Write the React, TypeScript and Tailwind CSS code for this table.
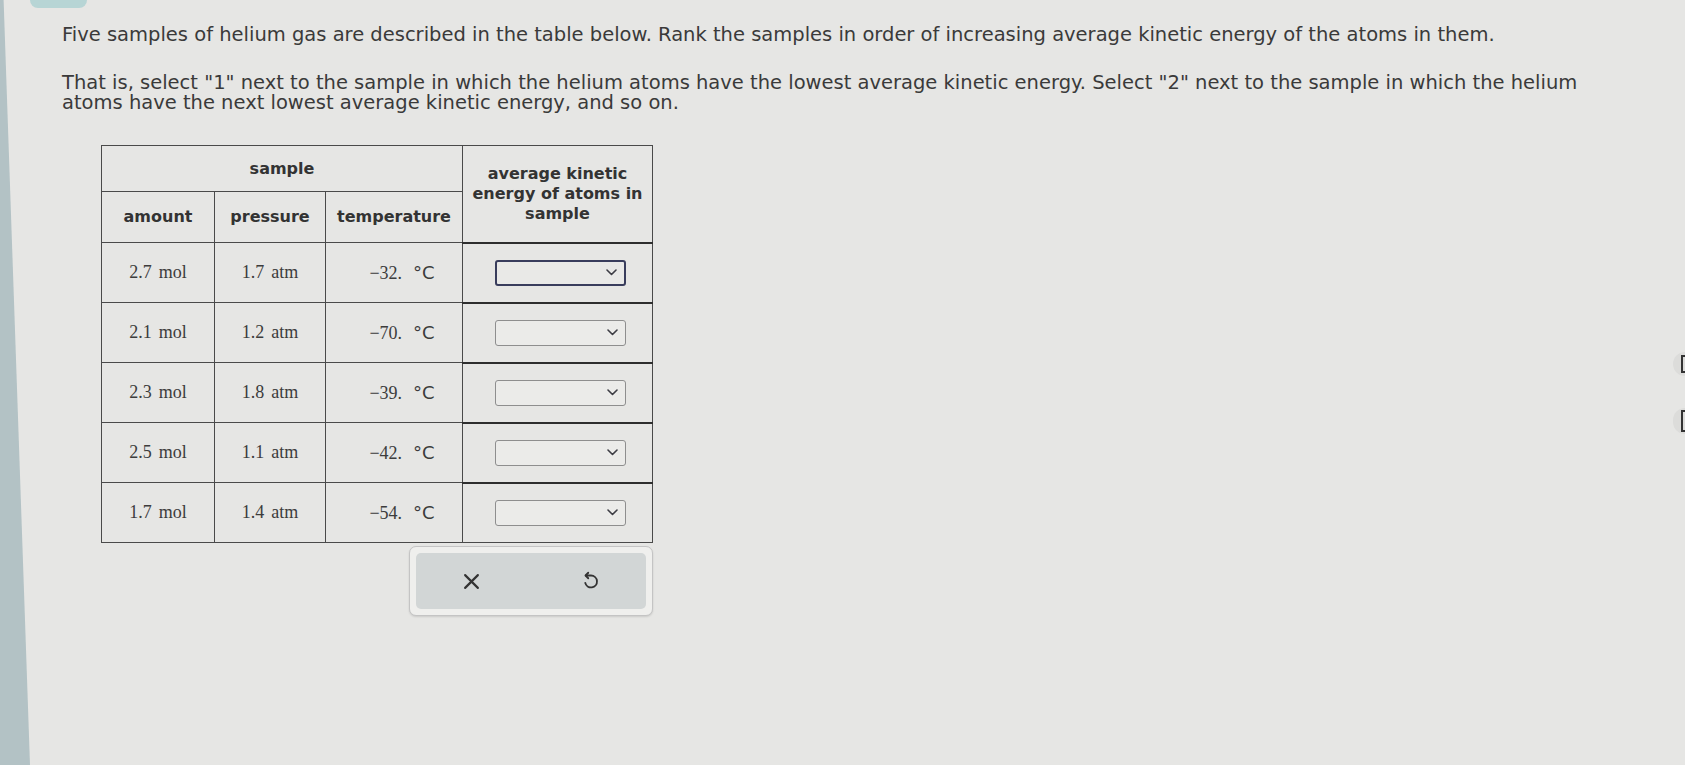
import React from "react";

const rows = [
  { amount: "2.7", pressure: "1.7", temp: "32", focused: true },
  { amount: "2.1", pressure: "1.2", temp: "70" },
  { amount: "2.3", pressure: "1.8", temp: "39" },
  { amount: "2.5", pressure: "1.1", temp: "42" },
  { amount: "1.7", pressure: "1.4", temp: "54" },
];

function Chevron() {
  return (
    <svg width="11" height="7" viewBox="0 0 11 7" fill="none">
      <path d="M1 1l4.5 4.5L10 1" stroke="#3d3d44" strokeWidth="1.6" strokeLinecap="round" strokeLinejoin="round" />
    </svg>
  );
}

function RankSelect({ focused }: { focused?: boolean }) {
  return (
    <div
      className={`mx-auto w-[131px] h-[26px] rounded-[3px] flex items-center justify-end pr-[7px] ${
        focused ? "border-2 border-[#393d5c] bg-[#e9e9e7]" : "border border-[#8e8e8e] bg-[#ebebe9]"
      }`}
    >
      <Chevron />
    </div>
  );
}

export default function App() {
  return (
    <div className="w-[1685px] h-[765px] flex bg-[#e6e6e4] overflow-hidden text-[#383838]">
      {/* left edge of the screen */}
      <div className="w-[30px] h-full bg-[#b3c2c5] [clip-path:polygon(0_0,12%_0,100%_100%,0_100%)]" />

      <div className="flex-1 min-w-0">
        <div className="w-[57px] h-[8px] rounded-b-[8px] bg-[#b7d5d5]" />

        <div className="pl-[32px] w-[1580px] font-['DejaVu_Sans',sans-serif] text-[19.5px] leading-[20px] text-[#3a3a3a]">
          <p className="mt-[17px]">
            Five samples of helium gas are described in the table below. Rank the samples in order of increasing average kinetic energy of the atoms in them.
          </p>
          <p className="mt-[28px]">
            That is, select "1" next to the sample in which the helium atoms have the lowest average kinetic energy. Select "2" next to the sample in which the helium atoms have the next lowest average kinetic energy, and so on.
          </p>
        </div>

        <div className="ml-[71px] mt-[32px] inline-flex flex-col items-end">
          <table className="border-collapse border-[1.5px] border-[#4a4a4a] font-['DejaVu_Sans',sans-serif]">
            <colgroup>
              <col className="w-[113px]" />
              <col className="w-[111px]" />
              <col className="w-[137px]" />
              <col className="w-[190px]" />
            </colgroup>
            <thead>
              <tr className="h-[46px]">
                <th colSpan={3} className="border border-[#4a4a4a] text-[16px] font-bold text-[#333]">
                  sample
                </th>
                <th rowSpan={2} className="border border-[#4a4a4a] text-[16px] leading-[20px] font-bold text-[#333] px-2">
                  average kinetic
                  <br />
                  energy of atoms in
                  <br />
                  sample
                </th>
              </tr>
              <tr className="h-[51px]">
                <th className="border border-[#4a4a4a] text-[16px] font-bold text-[#333]">amount</th>
                <th className="border border-[#4a4a4a] text-[16px] font-bold text-[#333]">pressure</th>
                <th className="border border-[#4a4a4a] text-[16px] font-bold text-[#333]">temperature</th>
              </tr>
            </thead>
            <tbody className="font-['Liberation_Serif',serif] text-[18px] text-[#3c3c3c]">
              {rows.map((r) => (
                <tr key={r.amount + r.temp} className="h-[60px]">
                  <td className="border border-[#4a4a4a] text-center">
                    {r.amount}
                    <span className="ml-[7px]">mol</span>
                  </td>
                  <td className="border border-[#4a4a4a] text-center">
                    {r.pressure}
                    <span className="ml-[7px]">atm</span>
                  </td>
                  <td className="border border-[#4a4a4a] text-center pl-[16px]">
                    −{r.temp}.
                    <span className="ml-[11px] font-['DejaVu_Sans',sans-serif] text-[18px]">°C</span>
                  </td>
                  <td className="border border-[#4a4a4a] border-t-2 border-t-[#2e2e2e] pl-[6px]">
                    <RankSelect focused={r.focused} />
                  </td>
                </tr>
              ))}
            </tbody>
          </table>

          <div className="mt-[3px] w-[244px] h-[70px] rounded-[7px] border border-[#c4c4c4] bg-[#efefed] shadow-[0_1px_2px_rgba(0,0,0,0.12)] p-[6px]">
            <div className="h-full rounded-[5px] bg-[#d2d6d6] flex items-center">
              <div className="flex-1 flex justify-center pr-[6px]">
                <svg width="17" height="17" viewBox="0 0 16 16" fill="none">
                  <path d="M2 2l12 12M14 2L2 14" stroke="#333" strokeWidth="2" strokeLinecap="round" />
                </svg>
              </div>
              <div className="flex-1 flex justify-center pl-[4px]">
                <svg width="22" height="22" viewBox="0 0 24 24" fill="none">
                  <path d="M9 3L6 6l3 3" stroke="#333" strokeWidth="2" strokeLinecap="round" strokeLinejoin="round" />
                  <path d="M6.5 6H12a6.5 6.5 0 1 1-6.3 8" stroke="#333" strokeWidth="2" strokeLinecap="round" />
                </svg>
              </div>
            </div>
          </div>
        </div>
      </div>

      {/* tool buttons cut off at the right edge */}
      <div className="w-[12px] h-full flex flex-col items-start pt-[352px] gap-[32px]">
        <div className="w-[12px] h-[24px] rounded-l-full bg-[#dcdcda] flex items-center justify-end">
          <div className="w-[4px] h-[18px] border-2 border-r-0 border-[#333]" />
        </div>
        <div className="w-[12px] h-[26px] rounded-l-full bg-[#dcdcda] flex items-center justify-end">
          <div className="w-[4px] h-[22px] border-2 border-r-0 border-[#333]" />
        </div>
      </div>
    </div>
  );
}
